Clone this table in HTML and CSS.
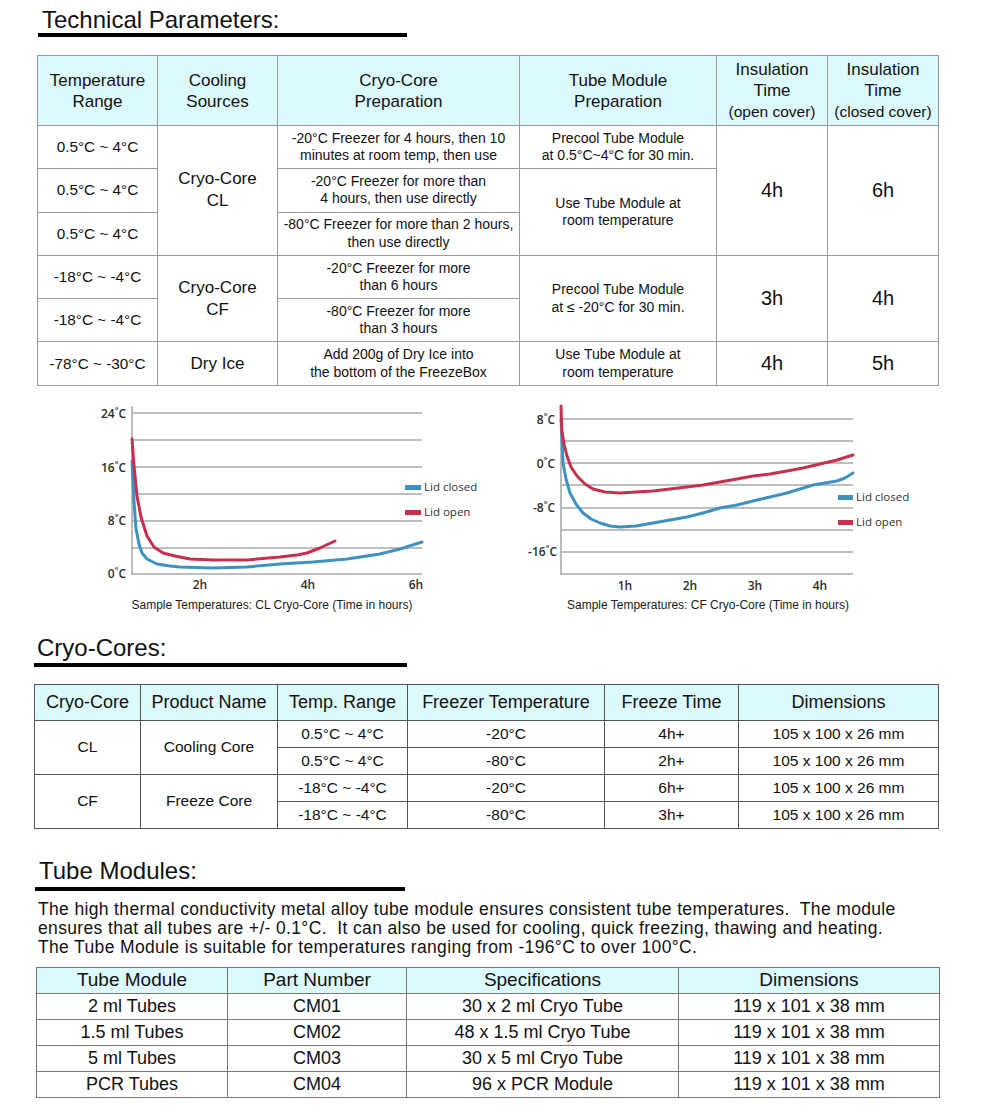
FILE: index.html
```html
<!DOCTYPE html>
<html lang="en">
<head>
<meta charset="utf-8">
<title>Technical Parameters</title>
<link rel="stylesheet" href="styles.css">
</head>
<body>
<div class="page">
  <h2 class="title title-tech">Technical Parameters:</h2>
  <table class="tbl t1">
    <colgroup>
      <col class="w120"><col class="w120"><col class="w242"><col class="w197"><col class="w111"><col class="w111">
    </colgroup>
    <thead>
      <tr class="h70">
        <th>Temperature<br>Range</th>
        <th>Cooling<br>Sources</th>
        <th>Cryo-Core<br>Preparation</th>
        <th>Tube Module<br>Preparation</th>
        <th>Insulation<br>Time<br><span class="sub">(open cover)</span></th>
        <th>Insulation<br>Time<br><span class="sub">(closed cover)</span></th>
      </tr>
    </thead>
    <tbody>
      <tr>
        <td class="rng">0.5°C ~ 4°C</td>
        <td class="src" rowspan="3">Cryo-Core<br>CL</td>
        <td class="sm">-20°C Freezer for 4 hours, then 10<br>minutes at room temp, then use</td>
        <td class="sm">Precool Tube Module<br>at 0.5°C~4°C for 30 min.</td>
        <td class="big" rowspan="3">4h</td>
        <td class="big" rowspan="3">6h</td>
      </tr>
      <tr>
        <td class="rng">0.5°C ~ 4°C</td>
        <td class="sm">-20°C Freezer for more than<br>4 hours, then use directly</td>
        <td class="sm" rowspan="2">Use Tube Module at<br>room temperature</td>
      </tr>
      <tr>
        <td class="rng">0.5°C ~ 4°C</td>
        <td class="sm">-80°C Freezer for more than 2 hours,<br>then use directly</td>
      </tr>
      <tr>
        <td class="rng">-18°C ~ -4°C</td>
        <td class="src" rowspan="2">Cryo-Core<br>CF</td>
        <td class="sm">-20°C Freezer for more<br>than 6 hours</td>
        <td class="sm" rowspan="2">Precool Tube Module<br>at ≤ -20°C for 30 min.</td>
        <td class="big" rowspan="2">3h</td>
        <td class="big" rowspan="2">4h</td>
      </tr>
      <tr>
        <td class="rng">-18°C ~ -4°C</td>
        <td class="sm">-80°C Freezer for more<br>than 3 hours</td>
      </tr>
      <tr>
        <td class="rng">-78°C ~ -30°C</td>
        <td class="src">Dry Ice</td>
        <td class="sm">Add 200g of Dry Ice into<br>the bottom of the FreezeBox</td>
        <td class="sm">Use Tube Module at<br>room temperature</td>
        <td class="big">4h</td>
        <td class="big">5h</td>
      </tr>
    </tbody>
  </table>

  <div class="charts">
    <svg class="chart chart-cl" width="410" height="225" viewBox="80 395 410 225" xmlns="http://www.w3.org/2000/svg">
      <g class="grid">
        <line x1="132" y1="412" x2="422" y2="412"/>
        <line x1="132" y1="439" x2="422" y2="439"/>
        <line x1="132" y1="466" x2="422" y2="466"/>
        <line x1="132" y1="493" x2="422" y2="493"/>
        <line x1="132" y1="520" x2="422" y2="520"/>
        <line x1="132" y1="547" x2="422" y2="547"/>
        <line x1="132" y1="573" x2="422" y2="573"/>
        <line x1="132" y1="405" x2="132" y2="574"/>
      </g>
      <g class="ylab">
        <text x="126" y="417">24˚C</text>
        <text x="126" y="471">16˚C</text>
        <text x="126" y="524">8˚C</text>
        <text x="126" y="577">0˚C</text>
      </g>
      <g class="xlab">
        <text x="200" y="588">2h</text>
        <text x="308" y="588">4h</text>
        <text x="416" y="588">6h</text>
      </g>
      <polyline class="blue" points="132,460 134,500 136,528 139,543 142,552 147,558 157,563 170,565 180,566 213,567 247,566 280,563 313,561 347,558 380,553 400,548 422,541"/>
      <polyline class="red" points="132,438 134,465 137,495 141,516 147,535 154,546 163,552 175,555 190,558 213,559 247,559 280,556 297,554 307,552 320,547 335,540"/>
      <g class="legend">
        <rect class="sw-blue" x="405" y="484" width="16" height="5"/>
        <text x="424" y="490">Lid closed</text>
        <rect class="sw-red" x="405" y="509" width="16" height="5"/>
        <text x="424" y="515">Lid open</text>
      </g>
      <text class="caption" x="272" y="608">Sample Temperatures: CL Cryo-Core (Time in hours)</text>
    </svg>

    <svg class="chart chart-cf" width="400" height="225" viewBox="520 395 400 225" xmlns="http://www.w3.org/2000/svg">
      <g class="grid">
        <line x1="561" y1="418" x2="853" y2="418"/>
        <line x1="561" y1="440" x2="853" y2="440"/>
        <line x1="561" y1="462" x2="853" y2="462"/>
        <line x1="561" y1="484" x2="853" y2="484"/>
        <line x1="561" y1="507" x2="853" y2="507"/>
        <line x1="561" y1="529" x2="853" y2="529"/>
        <line x1="561" y1="551" x2="853" y2="551"/>
        <line x1="561" y1="573" x2="853" y2="573"/>
        <line x1="561" y1="405" x2="561" y2="574"/>
      </g>
      <g class="ylab">
        <text x="555" y="423">8˚C</text>
        <text x="555" y="467">0˚C</text>
        <text x="555" y="511">-8˚C</text>
        <text x="557" y="555">-16˚C</text>
      </g>
      <g class="xlab">
        <text x="625" y="589">1h</text>
        <text x="690" y="589">2h</text>
        <text x="755" y="589">3h</text>
        <text x="820" y="589">4h</text>
      </g>
      <polyline class="blue" points="561,418 562,440 563,462 566,478 570,492 576,503 583,512 591,518 600,522 610,525 620,526 636,525 653,522 670,519 687,516 703,512 720,507 737,504 753,500 770,496 787,492 800,488 813,484 825,482 837,480 845,477 853,472"/>
      <polyline class="red" points="561,405 561.7,428 564,443 567,455 571,466 577,475 585,483 593,488 605,491 620,492 636,491 653,490 670,488 687,486 703,484 720,481 737,478 753,475 770,473 787,470 803,467 820,463 837,459 853,454"/>
      <g class="legend">
        <rect class="sw-blue" x="838" y="494" width="15" height="5"/>
        <text x="856" y="500">Lid closed</text>
        <rect class="sw-red" x="838" y="519" width="15" height="5"/>
        <text x="856" y="525">Lid open</text>
      </g>
      <text class="caption" x="708" y="608">Sample Temperatures: CF Cryo-Core (Time in hours)</text>
    </svg>
  </div>

  <h2 class="title title-cores">Cryo-Cores:</h2>
  <table class="tbl t2">
    <colgroup>
      <col class="w106"><col class="w137"><col class="w130"><col class="w197"><col class="w134"><col class="w200">
    </colgroup>
    <thead>
      <tr class="h36">
        <th>Cryo-Core</th>
        <th>Product Name</th>
        <th>Temp. Range</th>
        <th>Freezer Temperature</th>
        <th>Freeze Time</th>
        <th>Dimensions</th>
      </tr>
    </thead>
    <tbody>
      <tr>
        <td rowspan="2">CL</td>
        <td rowspan="2">Cooling Core</td>
        <td>0.5°C ~ 4°C</td>
        <td>-20°C</td>
        <td>4h+</td>
        <td>105 x 100 x 26 mm</td>
      </tr>
      <tr>
        <td>0.5°C ~ 4°C</td>
        <td>-80°C</td>
        <td>2h+</td>
        <td>105 x 100 x 26 mm</td>
      </tr>
      <tr>
        <td rowspan="2">CF</td>
        <td rowspan="2">Freeze Core</td>
        <td>-18°C ~ -4°C</td>
        <td>-20°C</td>
        <td>6h+</td>
        <td>105 x 100 x 26 mm</td>
      </tr>
      <tr>
        <td>-18°C ~ -4°C</td>
        <td>-80°C</td>
        <td>3h+</td>
        <td>105 x 100 x 26 mm</td>
      </tr>
    </tbody>
  </table>

  <h2 class="title title-tubes">Tube Modules:</h2>
  <p class="intro">The high thermal conductivity metal alloy tube module ensures consistent tube temperatures.&nbsp; The module<br>ensures that all tubes are +/- 0.1°C.&nbsp; It can also be used for cooling, quick freezing, thawing and heating.<br>The Tube Module is suitable for temperatures ranging from -196°C to over 100°C.</p>

  <table class="tbl t3">
    <colgroup>
      <col class="w191"><col class="w179"><col class="w272"><col class="w261">
    </colgroup>
    <thead>
      <tr>
        <th>Tube Module</th>
        <th>Part Number</th>
        <th>Specifications</th>
        <th>Dimensions</th>
      </tr>
    </thead>
    <tbody>
      <tr><td>2 ml Tubes</td><td>CM01</td><td>30 x 2 ml Cryo Tube</td><td>119 x 101 x 38 mm</td></tr>
      <tr><td>1.5 ml Tubes</td><td>CM02</td><td>48 x 1.5 ml Cryo Tube</td><td>119 x 101 x 38 mm</td></tr>
      <tr><td>5 ml Tubes</td><td>CM03</td><td>30 x 5 ml Cryo Tube</td><td>119 x 101 x 38 mm</td></tr>
      <tr><td>PCR Tubes</td><td>CM04</td><td>96 x PCR Module</td><td>119 x 101 x 38 mm</td></tr>
    </tbody>
  </table>
</div>
</body>
</html>
```

FILE: styles.css
```css
* { box-sizing: border-box; }

html, body {
  margin: 0;
  padding: 0;
  background: #ffffff;
}

body {
  font-family: "Liberation Sans", Arial, sans-serif;
  color: #111111;
}

.page {
  width: 1000px;
  display: flex;
  flex-direction: column;
  align-items: flex-start;
}

/* Section titles */
.title {
  margin: 0;
  font-size: 24px;
  font-weight: normal;
  line-height: 27px;
  color: #111111;
  border-bottom: 4px solid #000000;
}

.title-tech {
  margin: 6px 0 0 38px;
  width: 369px;
  padding-left: 4px;
}

.title-cores {
  margin: 13px 0 0 34px;
  width: 373px;
  padding-left: 3px;
  padding-bottom: 2px;
}

.title-tubes {
  margin: 28px 0 0 35px;
  width: 370px;
  padding-left: 4px;
  padding-bottom: 3px;
}

/* Tables */
.tbl {
  border-collapse: collapse;
  table-layout: fixed;
  text-align: center;
}

.tbl th,
.tbl td {
  padding: 0;
  text-align: center;
  vertical-align: middle;
  font-weight: normal;
}

.tbl th {
  background: #dcf9fc;
}

.w106 { width: 106px; }
.w111 { width: 111px; }
.w120 { width: 120px; }
.w130 { width: 130px; }
.w134 { width: 134px; }
.w137 { width: 137px; }
.w179 { width: 179px; }
.w191 { width: 191px; }
.w197 { width: 197px; }
.w200 { width: 200px; }
.w242 { width: 242px; }
.w261 { width: 261px; }
.w272 { width: 272px; }

/* Table 1 */
.t1 {
  margin: 18px 0 0 37px;
  width: 902px;
}

.t1 th,
.t1 td {
  border: 1px solid #9a9a9a;
}

.t1 th {
  font-size: 17px;
  line-height: 21px;
  height: 70px;
}

.t1 .sub {
  font-size: 15.5px;
}

.t1 td {
  height: 43.3px;
}

.t1 .rng {
  font-size: 15.3px;
}

.t1 .src {
  font-size: 17px;
  line-height: 22px;
}

.t1 .sm {
  font-size: 14px;
  line-height: 17.5px;
}

.t1 .big {
  font-size: 20px;
}

/* Charts */
.charts {
  margin-top: 10px;
  display: flex;
  gap: 30px;
  padding-left: 80px;
}

.chart {
  display: block;
  font-family: "Open Sans", "DejaVu Sans", sans-serif;
}

.chart .grid line {
  stroke: #a9a9a9;
  stroke-width: 1.6;
}

.chart .ylab text {
  font-size: 12px;
  font-weight: 600;
  fill: #2e2e2e;
  text-anchor: end;
}

.chart .xlab text {
  font-size: 12px;
  font-weight: 600;
  fill: #2e2e2e;
  text-anchor: middle;
}

.chart polyline {
  fill: none;
  stroke-width: 3;
  stroke-linejoin: round;
  stroke-linecap: round;
}

.chart .blue { stroke: #3d92c2; }
.chart .red { stroke: #c6304f; }
.chart .sw-blue { fill: #3d92c2; }
.chart .sw-red { fill: #c6304f; }

.chart .legend text {
  font-size: 11.5px;
  fill: #333333;
}

.chart .caption {
  font-family: "Liberation Sans", Arial, sans-serif;
  font-size: 12px;
  fill: #1a1a1a;
  text-anchor: middle;
}

/* Table 2 */
.t2 {
  margin: 17px 0 0 34px;
  width: 904px;
}

.t2 th,
.t2 td {
  border: 1px solid #555555;
}

.t2 th {
  font-size: 18px;
  height: 36px;
}

.t2 td {
  font-size: 15.5px;
  height: 27px;
}

/* Tube modules intro */
.intro {
  margin: 9px 0 0 38px;
  font-size: 17.5px;
  letter-spacing: 0.35px;
  line-height: 19px;
  color: #111111;
}

/* Table 3 */
.t3 {
  margin: 10px 0 0 36px;
  width: 903px;
}

.t3 th,
.t3 td {
  border: 1px solid #777777;
  height: 26px;
}

.t3 th {
  font-size: 19px;
}

.t3 td {
  font-size: 18px;
}
```
